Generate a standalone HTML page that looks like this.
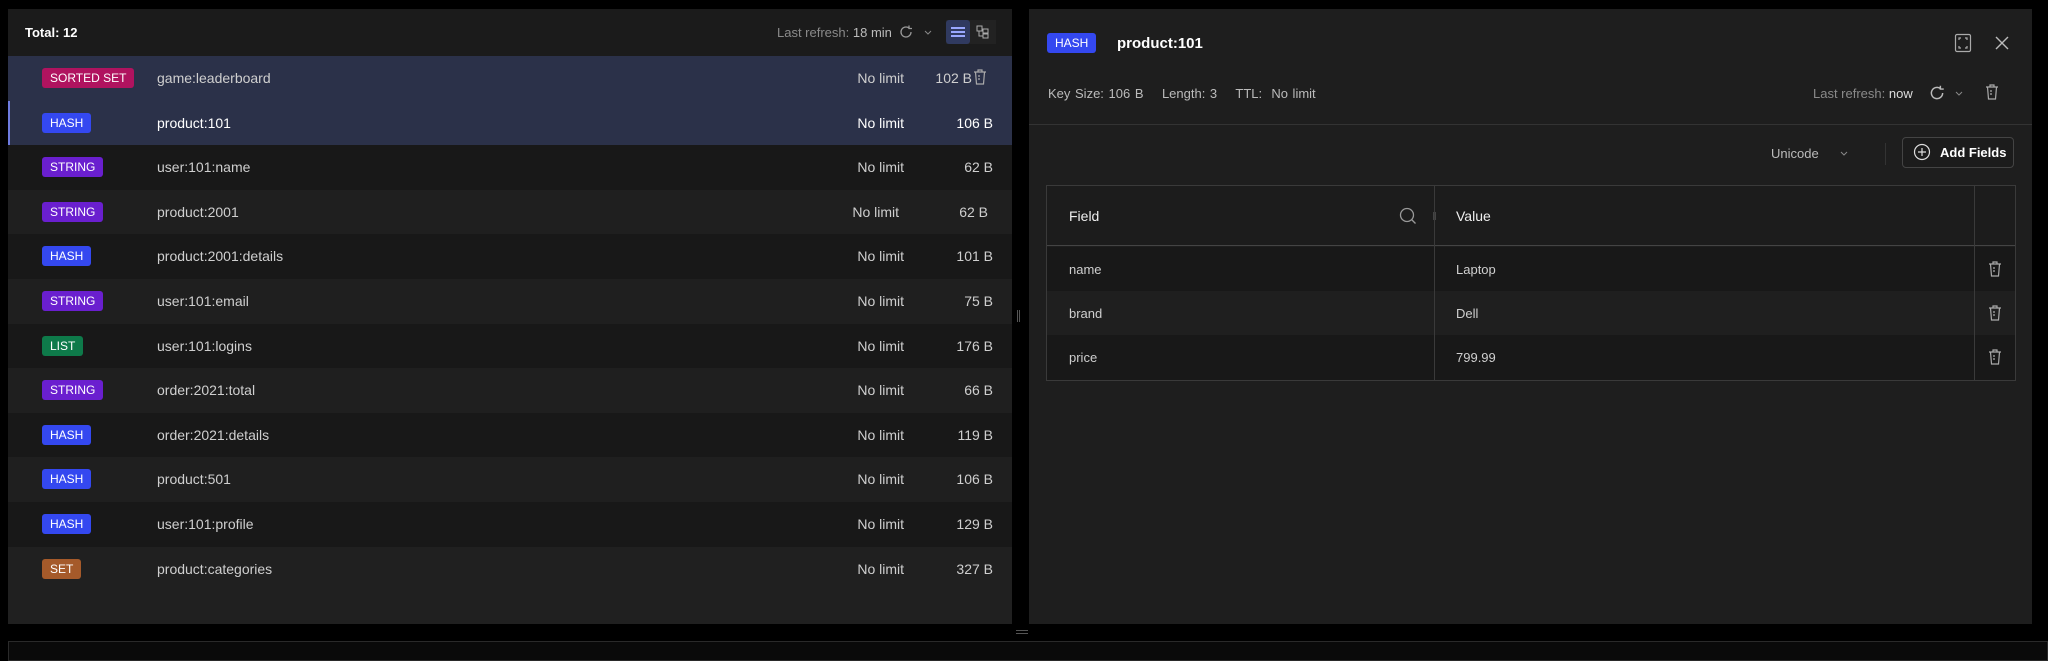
<!DOCTYPE html><html><head><style>
*{box-sizing:border-box;margin:0;padding:0}
body{width:2048px;height:651px;background:#000;font-family:"Liberation Sans",sans-serif;color:#cfcfcf;font-size:14px;position:relative;overflow:hidden}
.abs{position:absolute}
#left{left:8px;top:9px;width:1004px;height:615px;background:#202020}
#lh{left:0;top:0;width:1004px;height:47px;background:#1b1b1b}
.row{position:absolute;left:0;width:1004px;height:44.6px}
.badge{position:absolute;top:12px;height:20px;line-height:20px;padding:0 8px;border-radius:3px;font-size:12px;color:#fff}
.key{position:absolute;left:149px;top:0;line-height:44px}
.ttl{position:absolute;right:108px;line-height:44px}
.sz{position:absolute;right:19px;line-height:44px}
#right{left:1029px;top:9px;width:1003px;height:615px;background:#1e1e1e}
</style></head><body>
<div id="left" class="abs">
 <div id="lh" class="abs">
  <div class="abs" style="left:17px;top:16px;color:#fff;font-size:13px;font-weight:bold">Total: 12</div>
  <div class="abs" style="left:769px;top:16px;font-size:13px;color:#8a8a8a">Last refresh: <span style="color:#bbb">18 min</span></div>
  <svg class="abs" style="left:890px;top:15px" width="16" height="16" viewBox="0 0 16 16" fill="none" stroke="#999" stroke-width="1.3"><path d="M13 8a5 5 0 1 1-2-4M11 1.5v3h3"/></svg>
  <svg class="abs" style="left:915px;top:20px" width="10" height="8" viewBox="0 0 10 8" fill="none" stroke="#888"><path d="M2 2l3 3 3-3"/></svg>
  <div class="abs" style="left:938px;top:11px;width:50px;height:24px;background:#222"></div>
  <div class="abs" style="left:938px;top:11px;width:24px;height:24px;background:#303a60;border-radius:3px"></div>
  <svg class="abs" style="left:943px;top:17px" width="14" height="12" fill="#9aa8ff"><rect y="1" width="14" height="2"/><rect y="5" width="14" height="2"/><rect y="9" width="14" height="2"/></svg>
  <svg class="abs" style="left:968px;top:16px" width="14" height="14" fill="none" stroke="#aaa"><rect x="1" y="1" width="5" height="5"/><rect x="7" y="4" width="5" height="4"/><rect x="7" y="9" width="5" height="4"/><path d="M3 6v5h4"/></svg>
 </div>
 <div class="row" style="top:47px;background:#2b3149"><span class="badge" style="left:34px;background:#b0135f">SORTED SET</span><span class="key">game:leaderboard</span><span class="ttl">No limit</span><span class="sz" style="right:40px">102 B</span>
  <svg class="abs" style="left:964px;top:12px" width="16" height="18" fill="none" stroke="#aaa" stroke-width="1.2"><path d="M2 4h12M6 4V2h4v2M3.5 4l1 12h7l1-12M6 8h2M6 11h2"/></svg></div>
 <div class="row" style="top:91.6px;background:#2b3149;border-left:2px solid #6e7ce0"><span class="badge" style="left:32px;background:#3448f0">HASH</span><span class="key" style="left:147px;color:#fff">product:101</span><span class="ttl" style="color:#fff">No limit</span><span class="sz" style="color:#fff">106 B</span></div>
 <div class="row" style="top:136.2px;background:#181818"><span class="badge" style="left:34px;background:#6a1fcf">STRING</span><span class="key">user:101:name</span><span class="ttl">No limit</span><span class="sz">62 B</span></div>
 <div class="row" style="top:180.8px;background:#1f1f1f"><span class="badge" style="left:34px;background:#6a1fcf">STRING</span><span class="key">product:2001</span><span class="ttl" style="right:113px">No limit</span><span class="sz" style="right:24px">62 B</span></div>
 <div class="row" style="top:225.4px;background:#181818"><span class="badge" style="left:34px;background:#3448f0">HASH</span><span class="key">product:2001:details</span><span class="ttl">No limit</span><span class="sz">101 B</span></div>
 <div class="row" style="top:270px;background:#1f1f1f"><span class="badge" style="left:34px;background:#6a1fcf">STRING</span><span class="key">user:101:email</span><span class="ttl">No limit</span><span class="sz">75 B</span></div>
 <div class="row" style="top:314.6px;background:#181818"><span class="badge" style="left:34px;background:#0e7a4a">LIST</span><span class="key">user:101:logins</span><span class="ttl">No limit</span><span class="sz">176 B</span></div>
 <div class="row" style="top:359.2px;background:#1f1f1f"><span class="badge" style="left:34px;background:#6a1fcf">STRING</span><span class="key">order:2021:total</span><span class="ttl">No limit</span><span class="sz">66 B</span></div>
 <div class="row" style="top:403.8px;background:#181818"><span class="badge" style="left:34px;background:#3448f0">HASH</span><span class="key">order:2021:details</span><span class="ttl">No limit</span><span class="sz">119 B</span></div>
 <div class="row" style="top:448.4px;background:#1f1f1f"><span class="badge" style="left:34px;background:#3448f0">HASH</span><span class="key">product:501</span><span class="ttl">No limit</span><span class="sz">106 B</span></div>
 <div class="row" style="top:493px;background:#181818"><span class="badge" style="left:34px;background:#3448f0">HASH</span><span class="key">user:101:profile</span><span class="ttl">No limit</span><span class="sz">129 B</span></div>
 <div class="row" style="top:537.6px;background:#202020"><span class="badge" style="left:34px;background:#a55a2a">SET</span><span class="key">product:categories</span><span class="ttl">No limit</span><span class="sz">327 B</span></div>
</div>
<div class="abs" style="left:1017px;top:310px;width:3px;height:12px;border-left:1px solid #555;border-right:1px solid #555"></div>
<div class="abs" style="left:1016px;top:630px;width:12px;height:4px;border-top:1px solid #555;border-bottom:1px solid #555"></div>
<div class="abs" style="left:8px;top:641px;width:2040px;height:20px;background:#0a0a0a;border:1px solid #2a2a2a"></div>

<div id="right" class="abs">
 <span class="badge" style="left:18px;top:24px;background:#3448f0">HASH</span>
 <div class="abs" style="left:88px;top:26px;color:#fff;font-weight:bold;font-size:15px">product:101</div>
 <svg class="abs" style="left:925px;top:24px" width="18" height="20" fill="none" stroke="#aaa" stroke-width="1.2"><rect x="1.5" y="1.5" width="15" height="17" rx="1.5"/><path d="M5 7V5h2M11 5h2v2M13 13v2h-2M7 15H5v-2"/></svg>
 <svg class="abs" style="left:965px;top:26px" width="16" height="16" stroke="#bbb" stroke-width="1.4"><path d="M2 2l12 12M14 2L2 14"/></svg>
 <div class="abs" style="left:19px;top:77px;font-size:13px;color:#bbb;word-spacing:1px">Key Size: 106 B &nbsp;&nbsp; Length: 3 &nbsp;&nbsp; TTL: &nbsp;No limit</div>
 <div class="abs" style="left:784px;top:77px;font-size:13px;color:#8a8a8a">Last refresh: <span style="color:#ddd">now</span></div>
 <svg class="abs" style="left:899px;top:75px" width="18" height="18" viewBox="0 0 16 16" fill="none" stroke="#bbb" stroke-width="1.3"><path d="M13 8a5 5 0 1 1-2-4M11 1.5v3h3"/></svg>
 <svg class="abs" style="left:925px;top:81px" width="10" height="8" fill="none" stroke="#888"><path d="M2 2l3 3 3-3"/></svg>
 <svg class="abs" style="left:955px;top:74px" width="16" height="18" fill="none" stroke="#aaa" stroke-width="1.2"><path d="M2 4h12M6 4V2h4v2M3.5 4l1 12h7l1-12M6 8h2M6 11h2"/></svg>
 <div class="abs" style="left:0;top:115px;width:1003px;height:1px;background:#333"></div>
 <div class="abs" style="left:742px;top:137px;font-size:13px;color:#bbb">Unicode</div>
 <svg class="abs" style="left:810px;top:141px" width="10" height="8" fill="none" stroke="#888"><path d="M2 2l3 3 3-3"/></svg>
 <div class="abs" style="left:856px;top:134px;width:1px;height:22px;background:#333"></div>
 <div class="abs" style="left:873px;top:128px;width:112px;height:31px;border:1px solid #444;border-radius:4px;background:#1c1c1c;color:#fff;font-size:13px;line-height:29px;padding-left:37px;font-weight:bold">Add Fields</div>
 <svg class="abs" style="left:884px;top:134px" width="18" height="18" fill="none" stroke="#ddd" stroke-width="1.2"><circle cx="9" cy="9" r="7.5"/><path d="M9 5v8M5 9h8"/></svg>
 <div class="abs" style="left:17px;top:176px;width:970px;height:196px;border:1px solid #3a3a3a">
  <div class="abs" style="left:0;top:0;width:968px;height:60px;background:#1c1c1c;border-bottom:1px solid #444"></div>
  <div class="abs" style="left:22px;top:22px;color:#eee;font-size:14px">Field</div>
  <svg class="abs" style="left:351px;top:20px" width="20" height="20" fill="none" stroke="#999" stroke-width="1.3"><circle cx="9" cy="9" r="6.5"/><path d="M13.5 13.5l4 4"/></svg>
  <div class="abs" style="left:386px;top:26px;width:3px;height:8px;border-left:1px solid #444;border-right:1px solid #444"></div>
  <div class="abs" style="left:409px;top:22px;color:#eee;font-size:14px">Value</div>
  <div class="abs" style="left:0;top:61px;width:968px;height:44px;background:#181818"></div>
  <div class="abs" style="left:0;top:105px;width:968px;height:44px;background:#1f1f1f"></div>
  <div class="abs" style="left:0;top:149px;width:968px;height:45px;background:#181818"></div>
  <div class="abs" style="left:387px;top:0;width:1px;height:194px;background:#3a3a3a"></div>
  <div class="abs" style="left:927px;top:0;width:1px;height:194px;background:#3a3a3a"></div>
  <div class="abs" style="left:22px;top:76px;font-size:13px">name</div><div class="abs" style="left:409px;top:76px;font-size:13px">Laptop</div>
  <div class="abs" style="left:22px;top:120px;font-size:13px">brand</div><div class="abs" style="left:409px;top:120px;font-size:13px">Dell</div>
  <div class="abs" style="left:22px;top:164px;font-size:13px">price</div><div class="abs" style="left:409px;top:164px;font-size:13px">799.99</div>
  <svg class="abs" style="left:940px;top:74px" width="16" height="18" fill="none" stroke="#aaa" stroke-width="1.2"><path d="M2 4h12M6 4V2h4v2M3.5 4l1 12h7l1-12M6 8h2M6 11h2"/></svg>
  <svg class="abs" style="left:940px;top:118px" width="16" height="18" fill="none" stroke="#aaa" stroke-width="1.2"><path d="M2 4h12M6 4V2h4v2M3.5 4l1 12h7l1-12M6 8h2M6 11h2"/></svg>
  <svg class="abs" style="left:940px;top:162px" width="16" height="18" fill="none" stroke="#aaa" stroke-width="1.2"><path d="M2 4h12M6 4V2h4v2M3.5 4l1 12h7l1-12M6 8h2M6 11h2"/></svg>
 </div>
</div>
</body></html>
